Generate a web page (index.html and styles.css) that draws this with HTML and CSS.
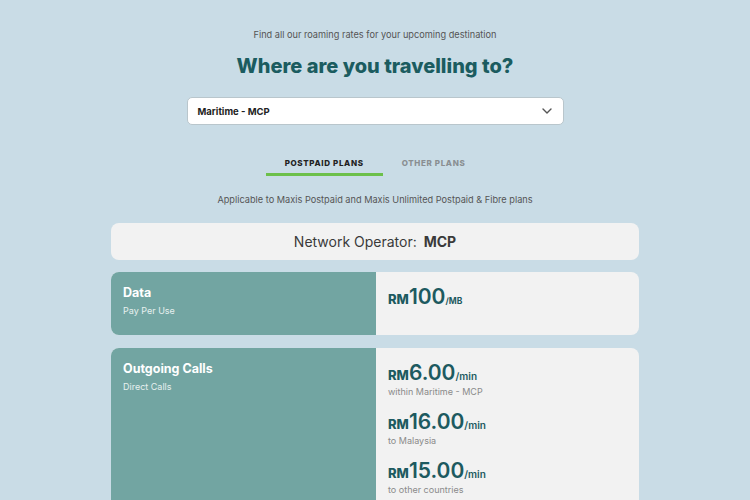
FILE: index.html
```html
<!DOCTYPE html>
<html>
<head>
<meta charset="utf-8">
<link rel="stylesheet" href="styles.css">
</head>
<body>
<main class="page">
  <p class="intro">Find all our roaming rates for your upcoming destination</p>
  <h1 class="title">Where are you travelling to?</h1>
  <div class="select">
    <span class="select-value">Maritime - MCP</span>
    <svg class="chev" width="10" height="6" viewBox="0 0 10 6"><path d="M1 1 L5 5 L9 1" fill="none" stroke="#555" stroke-width="1.4" stroke-linecap="round" stroke-linejoin="round"/></svg>
  </div>
  <nav class="tabs">
    <span class="tab active">POSTPAID PLANS</span>
    <span class="tab">OTHER PLANS</span>
  </nav>
  <p class="applicable">Applicable to Maxis Postpaid and Maxis Unlimited Postpaid &amp; Fibre plans</p>
  <section class="cards">
    <div class="operator">Network Operator:&nbsp; <b>MCP</b></div>
    <div class="rate">
      <div class="rate-label">
        <div class="label-title">Data</div>
        <div class="label-sub">Pay Per Use</div>
      </div>
      <div class="rate-values">
        <div class="price"><span class="cur">RM</span><span class="amt">100</span><span class="unit up">/MB</span></div>
      </div>
    </div>
    <div class="rate">
      <div class="rate-label">
        <div class="label-title">Outgoing Calls</div>
        <div class="label-sub">Direct Calls</div>
      </div>
      <div class="rate-values">
        <div class="price-block">
          <div class="price"><span class="cur">RM</span><span class="amt">6.00</span><span class="unit">/min</span></div>
          <div class="price-note">within Maritime - MCP</div>
        </div>
        <div class="price-block">
          <div class="price"><span class="cur">RM</span><span class="amt">16.00</span><span class="unit">/min</span></div>
          <div class="price-note">to Malaysia</div>
        </div>
        <div class="price-block">
          <div class="price"><span class="cur">RM</span><span class="amt">15.00</span><span class="unit">/min</span></div>
          <div class="price-note">to other countries</div>
        </div>
      </div>
    </div>
  </section>
</main>
</body>
</html>
```
FILE: styles.css
```css
* { box-sizing: border-box; }
html, body { margin: 0; padding: 0; }
body {
  background: #c9dce6;
  font-family: Inter, "Noto Sans", sans-serif;
  color: #333;
  height: 500px;
  overflow: hidden;
}
.page {
  display: flex;
  flex-direction: column;
  align-items: center;
  padding-top: 29px;
}
.intro {
  margin: 0;
  font-size: 9.2px;
  line-height: 12px;
  color: #555;
}
.title {
  margin: 13px 0 0;
  font-size: 20px;
  line-height: 24px;
  font-weight: 800;
  color: #1b5c60;
}
.select {
  margin-top: 19px;
  width: 377px;
  height: 28px;
  background: #fff;
  border: 1px solid #b9c6cc;
  border-radius: 5px;
  display: flex;
  align-items: center;
  justify-content: space-between;
  padding: 0 11px 0 10px;
}
.select-value {
  font-size: 9.5px;
  font-weight: 700;
  color: #222;
}
.tabs {
  margin-top: 32px;
  display: flex;
}
.tab {
  padding: 0 19px 4px;
  font-size: 8px;
  line-height: 12px;
  font-weight: 800;
  letter-spacing: 0.65px;
  color: #8a8f92;
  border-bottom: 3px solid transparent;
}
.tab.active {
  color: #222;
  border-bottom-color: #6cc04a;
}
.applicable {
  margin: 18px 0 0;
  font-size: 9.2px;
  line-height: 12px;
  color: #555;
}
.cards {
  margin-top: 17px;
  width: 528px;
  display: flex;
  flex-direction: column;
  gap: 12px;
}
.operator {
  height: 37px;
  background: #f2f2f2;
  border-radius: 8px;
  display: flex;
  align-items: center;
  justify-content: center;
  font-size: 14px;
  color: #3a3a3a;
}
.operator b { font-weight: 700; margin-left: 3px; }
.rate {
  display: grid;
  grid-template-columns: 265px 1fr;
  border-radius: 8px;
  overflow: hidden;
  background: #f2f2f2;
  min-height: 63px;
}
.rate + .rate { margin-top: 1px; }
.rate-label {
  background: #72a5a2;
  color: #fff;
  padding: 13px 12px;
}
.label-title {
  font-size: 12.5px;
  font-weight: 700;
  line-height: 16px;
}
.label-sub {
  margin-top: 4px;
  font-size: 9px;
  line-height: 11px;
  color: #e6f0ef;
}
.rate-values {
  padding: 14px 12px;
  display: flex;
  flex-direction: column;
  gap: 13px;
}
.price {
  color: #1d5a60;
  font-weight: 700;
  display: flex;
  align-items: baseline;
  line-height: 22px;
  height: 22px;
}
.cur { font-size: 13px; font-weight: 800; }
.amt { font-size: 21px; font-weight: 600; }
.unit { font-size: 10px; font-weight: 600; }
.unit.up { font-size: 8.5px; font-weight: 700; }
.price-note {
  margin-top: 2px;
  font-size: 9px;
  line-height: 12px;
  color: #8a8a8a;
}
```
